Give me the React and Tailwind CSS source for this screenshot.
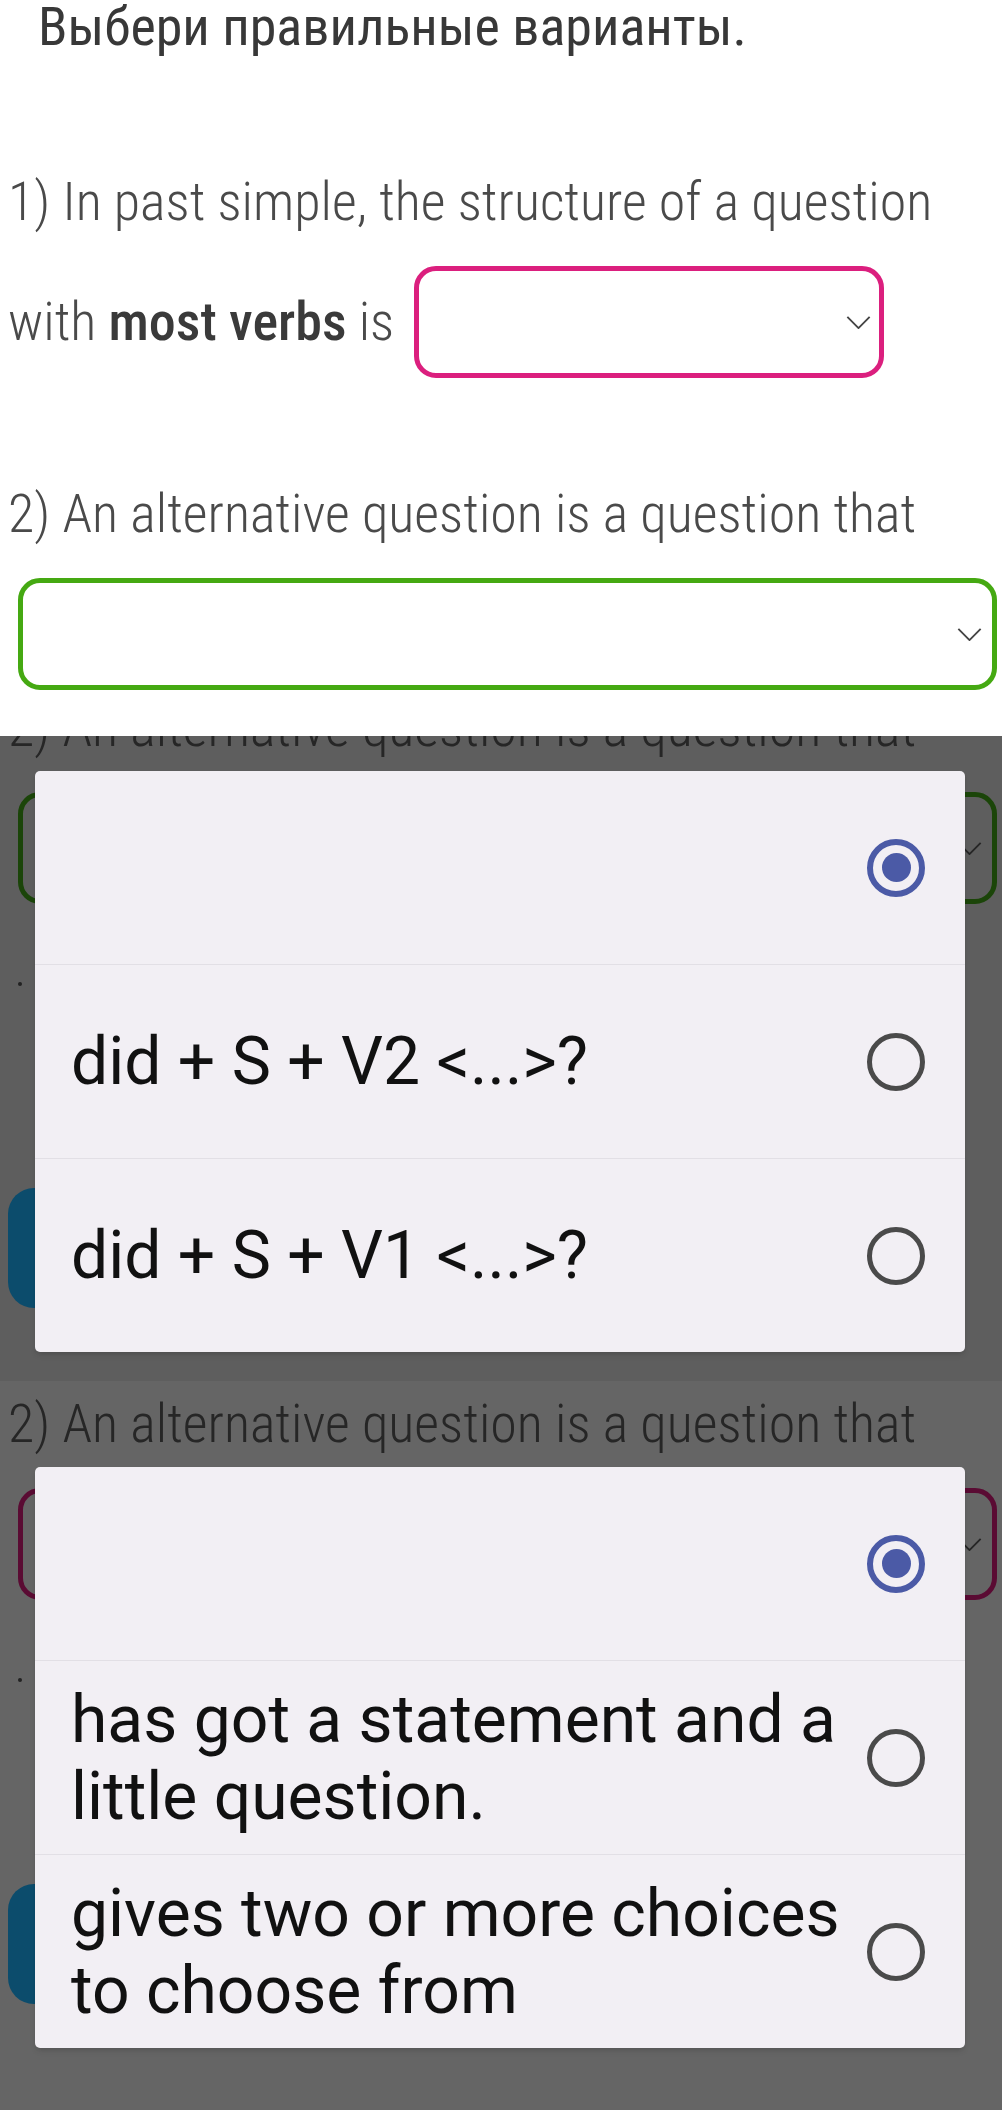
import React from 'react';

const Chevron = ({ className = '' }) => (
  <svg viewBox="0 0 26 14" className={`w-[25px] h-[13px] ${className}`} fill="none" stroke="currentColor" strokeWidth="2">
    <polyline points="1,1 13,13 25,1" />
  </svg>
);

const Radio = ({ checked }) =>
  checked ? (
    <div className="w-[58px] h-[58px] shrink-0 rounded-full border-[6px] border-[#4b5aa6] flex items-center justify-center">
      <div className="w-[29px] h-[29px] rounded-full bg-[#4b5aa6]" />
    </div>
  ) : (
    <div className="w-[58px] h-[58px] shrink-0 rounded-full border-[5px] border-[#4a4a4a]" />
  );

const Sheet = ({ options, className }) => (
  <div className={`absolute left-[35px] w-[930px] bg-[#f2eff4] rounded-[5px] shadow-md ${className}`}>
    <div className="h-[193px] flex items-center justify-end pr-[40px]">
      <Radio checked />
    </div>
    {options.map((o) => (
      <div key={o} className="h-[194px] border-t border-[#e2dfe5] flex items-center gap-[14px] pl-[36px] pr-[40px]">
        <span className="flex-1 font-['Roboto',sans-serif] text-[66px] leading-[77px] text-[#111]">{o}</span>
        <Radio />
      </div>
    ))}
  </div>
);

// dimmed page behind the option sheet
const DimPage = ({ textClass, boxClass }) => (
  <>
    <p className={`pl-[8px] h-[60px] text-[54px] leading-[60px] font-light whitespace-nowrap text-[#262626] ${textClass}`}>
      2) An alternative question is a question that
    </p>
    <div className={`mt-[34px] ml-[18px] w-[979px] h-[112px] border-[5px] rounded-[22px] flex items-center justify-end pr-[10px] text-[#262626] ${boxClass}`}>
      <Chevron />
    </div>
    <div className="mt-[78px] ml-[18px] w-[4px] h-[4px] rounded-full bg-[#222]" />
    <div className="mt-[202px] ml-[8px] w-[300px] h-[120px] rounded-[26px] bg-[#0c4c6c]" />
  </>
);

export default function App() {
  return (
    <div className="w-[1002px] font-['Roboto_Condensed',Roboto,sans-serif]">
      <section className="h-[736px] bg-white">
        <h1 className="pl-[38px] h-[54px] text-[54px] leading-[54px] font-normal text-[#383838] whitespace-nowrap">
          Выбери правильные варианты.
        </h1>
        <p className="mt-[118px] pl-[8px] h-[60px] text-[54px] leading-[60px] font-light text-[#4a4a4a] whitespace-nowrap">
          1) In past simple, the structure of a question
        </p>
        <div className="mt-[34px] h-[112px] flex items-center">
          <p className="w-[414px] pl-[8px] text-[54px] leading-[60px] font-light text-[#4a4a4a] whitespace-nowrap">
            with <b className="font-medium text-[#3a3a3a]">most verbs</b> is
          </p>
          <div className="w-[470px] h-[112px] border-[5px] border-[#db1f7e] rounded-[22px] flex items-center justify-end pr-[8px] text-[#444]">
            <Chevron />
          </div>
        </div>
        <p className="mt-[106px] pl-[8px] h-[60px] text-[54px] leading-[60px] font-light text-[#4a4a4a] whitespace-nowrap">
          2) An alternative question is a question that
        </p>
        <div className="mt-[34px] ml-[18px] w-[979px] h-[112px] border-[5px] border-[#45a912] rounded-[22px] flex items-center justify-end pr-[10px] text-[#444]">
          <Chevron />
        </div>
      </section>

      <section className="relative h-[645px] bg-[#5e5e5e] overflow-hidden">
        <DimPage textClass="-mt-[38px]" boxClass="border-[#1b4509]" />
        <Sheet className="top-[35px]" options={['did + S + V2 <...>?', 'did + S + V1 <...>?']} />
      </section>

      <section className="relative h-[729px] bg-[#656565] overflow-hidden">
        <DimPage textClass="mt-[13px]" boxClass="border-[#5a0b33]" />
        <Sheet
          className="top-[86px]"
          options={['has got a statement and a little question.', 'gives two or more choices to choose from']}
        />
      </section>
    </div>
  );
}
